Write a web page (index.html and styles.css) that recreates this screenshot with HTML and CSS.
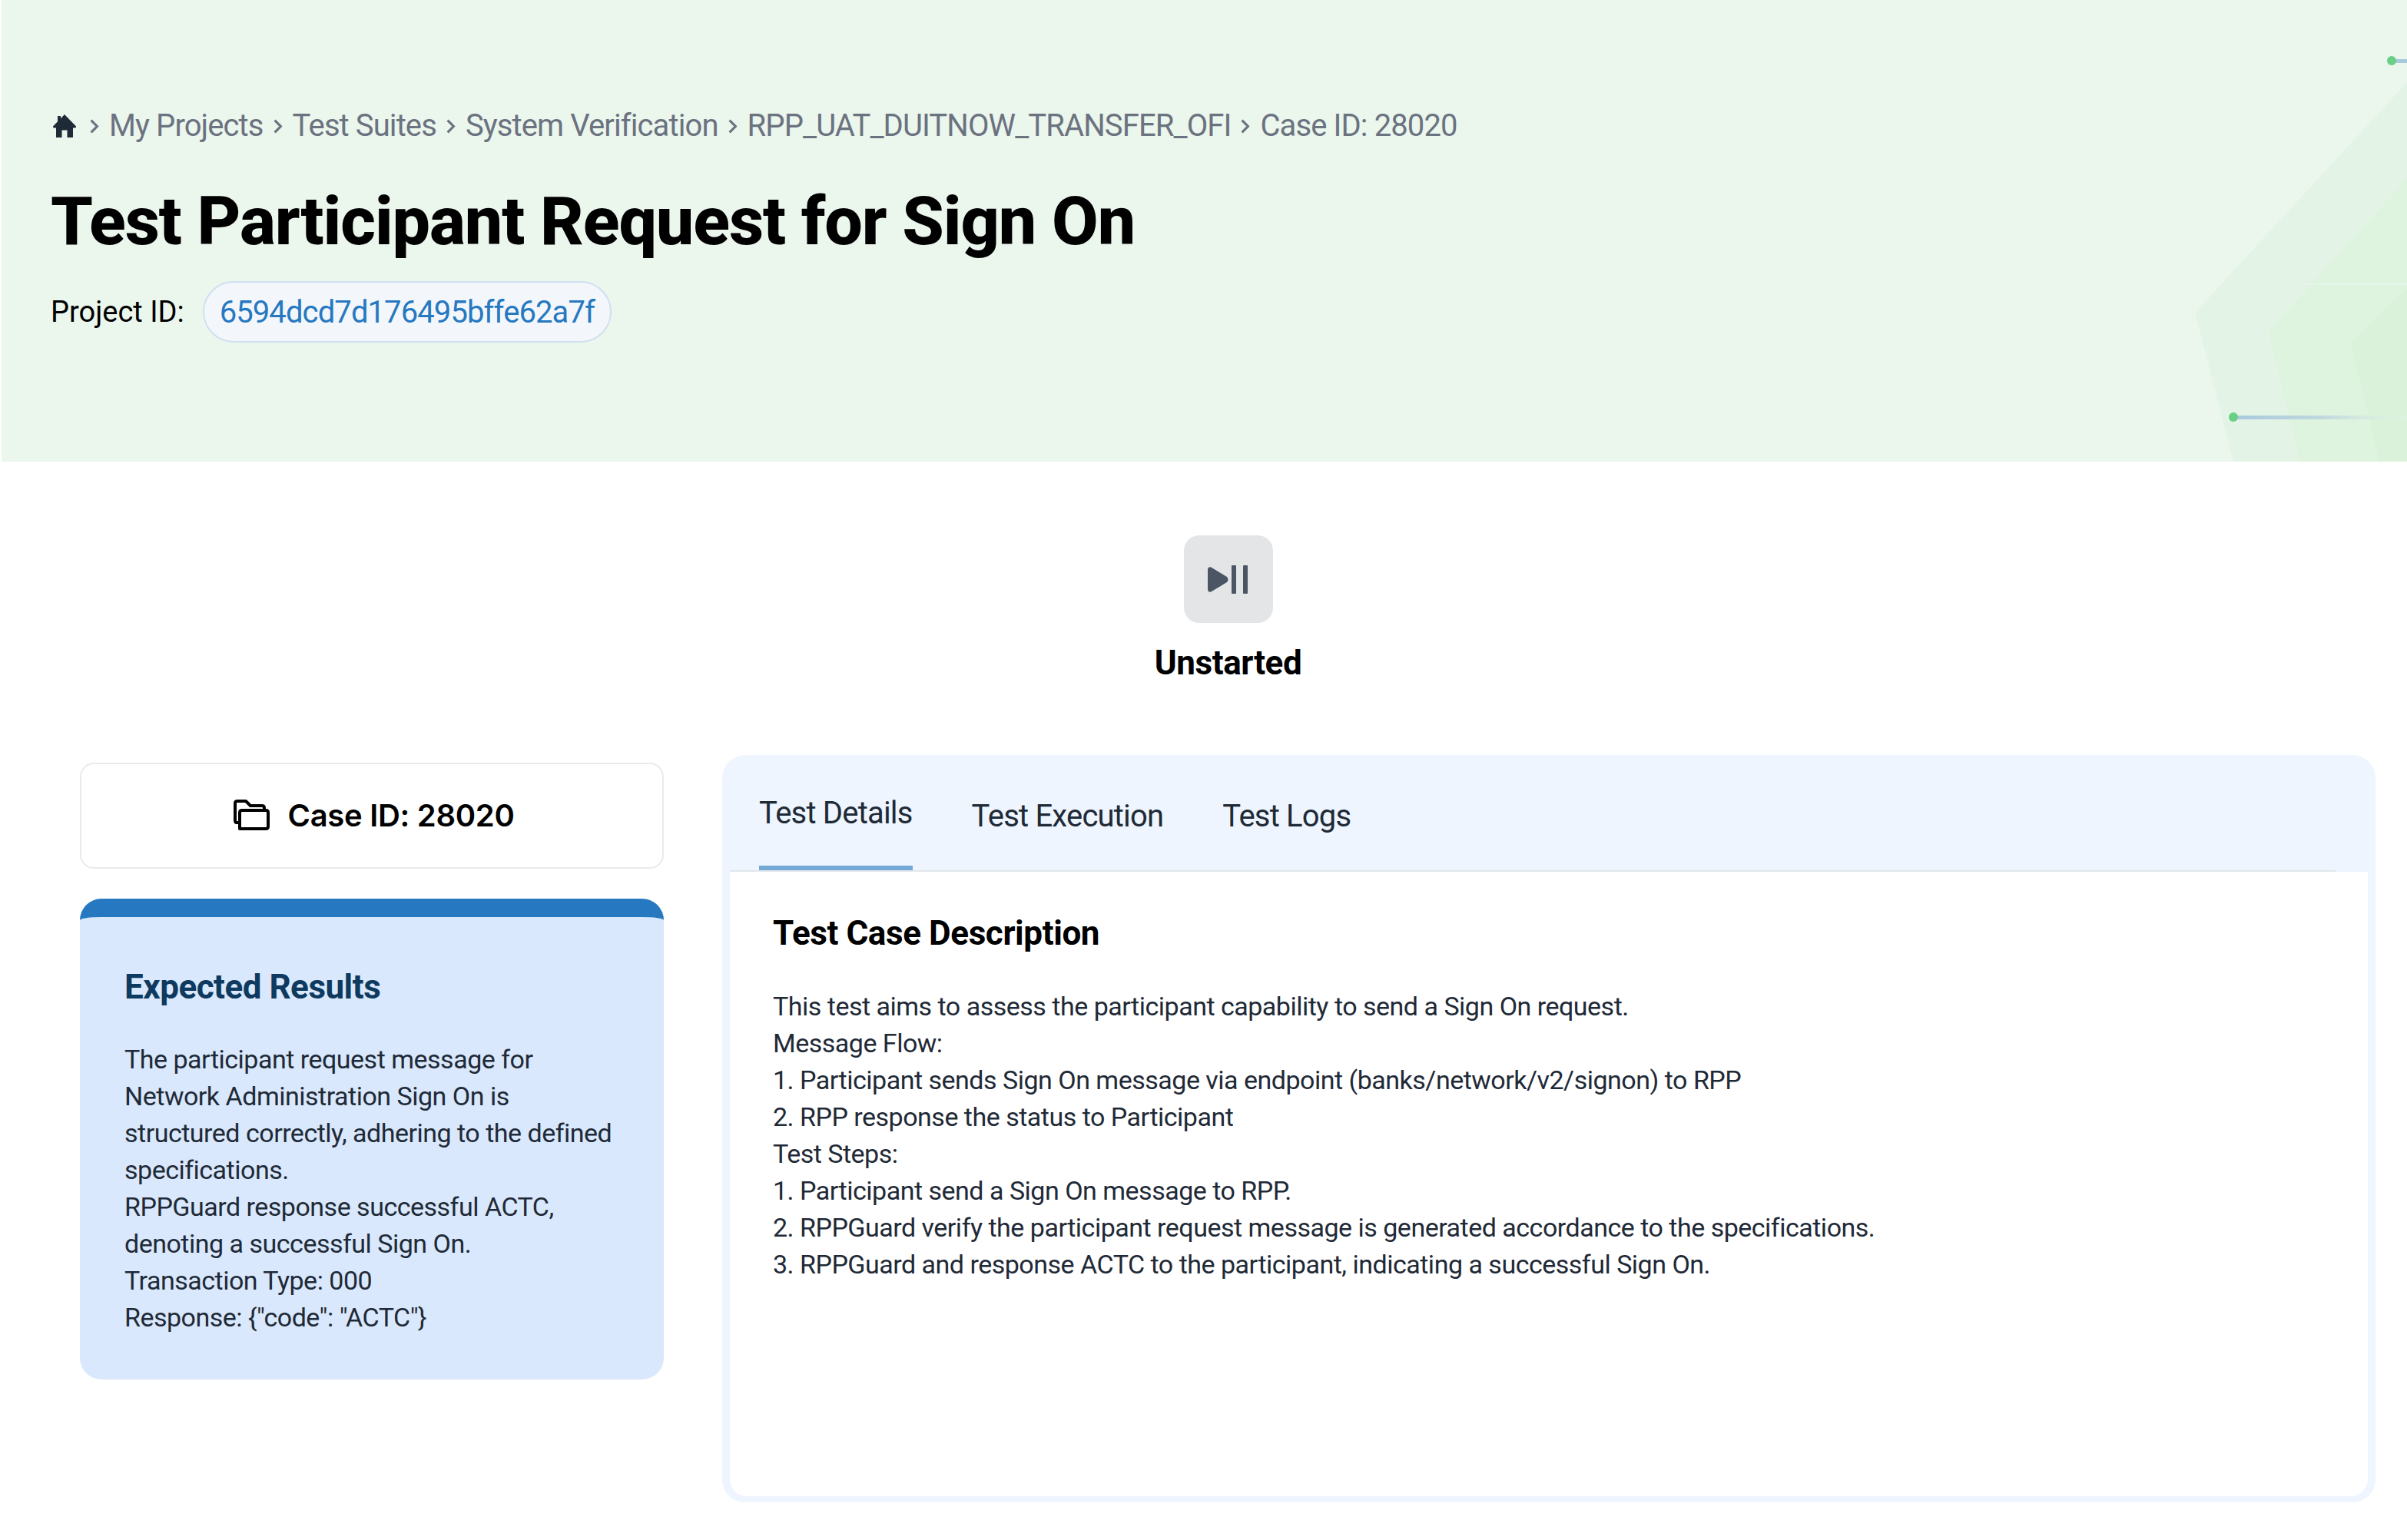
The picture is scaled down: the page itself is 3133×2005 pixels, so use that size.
FILE: index.html
```html
<!DOCTYPE html>
<html lang="en">
<head>
<meta charset="utf-8">
<title>Test Participant Request for Sign On</title>
<link rel="stylesheet" href="styles.css">
</head>
<body>
<header class="hero">
  <svg class="hero-art" viewBox="0 0 600 601" aria-hidden="true">
    <defs>
      <linearGradient id="fade" x1="0" x2="1" y1="0" y2="0">
        <stop offset="0" stop-color="#a9c9df"/>
        <stop offset="0.5" stop-color="#c0d8dd"/>
        <stop offset="1" stop-color="#e4f3e6" stop-opacity="0.4"/>
      </linearGradient>
    </defs>
    <polygon points="324,407 600,107 600,601 374,601" fill="#e3f4e6"/>
    <polygon points="420,431 600,233 600,601 460,601" fill="#def4df"/>
    <polygon points="527,447 600,375 600,601 564,601" fill="#d9f2d9"/>
    <rect x="467" y="369" width="133" height="2" fill="#e6f6e8"/>
    <rect x="580" y="77" width="20" height="5" fill="#a9c9df"/>
    <circle cx="580" cy="79" r="6" fill="#68cf85"/>
    <rect x="374" y="541" width="226" height="5" fill="url(#fade)"/>
    <circle cx="374" cy="543" r="6" fill="#68cf85"/>
  </svg>
  <nav class="crumbs">
    <svg class="home" viewBox="0 0 32 32" aria-hidden="true"><path d="M16 1 L31 16.5 Q31.5 18.5 29.5 18.5 H27 V31 H19.5 V21.5 H12.5 V31 H5 V18.5 H2.5 Q.5 18.5 1 16.5 L7 10.3 V3 H11 V6.2 Z" fill="#1f2a37"/></svg>
    <svg class="sep" viewBox="0 0 10 16" aria-hidden="true"><path d="M2 2 L8 8 L2 14" fill="none" stroke="#6b7280" stroke-width="2.4"/></svg>
    <span>My Projects</span>
    <svg class="sep" viewBox="0 0 10 16" aria-hidden="true"><path d="M2 2 L8 8 L2 14" fill="none" stroke="#6b7280" stroke-width="2.4"/></svg>
    <span>Test Suites</span>
    <svg class="sep" viewBox="0 0 10 16" aria-hidden="true"><path d="M2 2 L8 8 L2 14" fill="none" stroke="#6b7280" stroke-width="2.4"/></svg>
    <span>System Verification</span>
    <svg class="sep" viewBox="0 0 10 16" aria-hidden="true"><path d="M2 2 L8 8 L2 14" fill="none" stroke="#6b7280" stroke-width="2.4"/></svg>
    <span>RPP_UAT_DUITNOW_TRANSFER_OFI</span>
    <svg class="sep" viewBox="0 0 10 16" aria-hidden="true"><path d="M2 2 L8 8 L2 14" fill="none" stroke="#6b7280" stroke-width="2.4"/></svg>
    <span>Case ID: 28020</span>
  </nav>
  <h1 class="title">Test Participant Request for Sign On</h1>
  <div class="project">
    <span class="project-label">Project ID:</span>
    <span class="pill">6594dcd7d176495bffe62a7f</span>
  </div>
</header>

<section class="status">
  <div class="status-icon">
    <svg viewBox="0 0 52 37" aria-hidden="true">
      <path d="M1 6 Q1 2 5 4 L24 15.5 Q27 18.5 24 21.5 L5 33 Q1 35 1 31 Z" fill="#4b5563" stroke="#4b5563" stroke-width="2" stroke-linejoin="round"/>
      <rect x="31" y="0" width="6" height="37" rx="1" fill="#4b5563"/>
      <rect x="46" y="0" width="6" height="37" rx="1" fill="#4b5563"/>
    </svg>
  </div>
  <div class="status-label">Unstarted</div>
</section>

<main class="content">
  <aside class="side">
    <div class="case-card">
      <svg class="folder" viewBox="0 0 48 40" aria-hidden="true">
        <path d="M9 30 H5 Q3 30 3 27 V5 Q3 2 6 2 H17 L23 8 H38 Q41 8 41 11 V14" fill="none" stroke="#000" stroke-width="4" stroke-linejoin="round"/>
        <path d="M9 38 V17 Q9 14 12 14 H43 Q46 14 46 17 V35 Q46 38 43 38 Z" fill="none" stroke="#000" stroke-width="4" stroke-linejoin="round"/>
      </svg>
      <span>Case ID: 28020</span>
    </div>
    <div class="results">
      <h2>Expected Results</h2>
      <p>The participant request message for<br>Network Administration Sign On is<br>structured correctly, adhering to the defined<br>specifications.<br>RPPGuard response successful ACTC,<br>denoting a successful Sign On.<br>Transaction Type: 000<br>Response: {"code": "ACTC"}</p>
    </div>
  </aside>

  <section class="panel">
    <div class="tabs">
      <div class="tab tab-active">Test Details</div>
      <div class="tab">Test Execution</div>
      <div class="tab">Test Logs</div>
    </div>
    <div class="panel-body">
      <h2>Test Case Description</h2>
      <p>This test aims to assess the participant capability to send a Sign On request.<br>Message Flow:<br>1. Participant sends Sign On message via endpoint (banks/network/v2/signon) to RPP<br>2. RPP response the status to Participant<br>Test Steps:<br>1. Participant send a Sign On message to RPP.<br>2. RPPGuard verify the participant request message is generated accordance to the specifications.<br>3. RPPGuard and response ACTC to the participant, indicating a successful Sign On.</p>
    </div>
  </section>
</main>
</body>
</html>
```

FILE: styles.css
```css
* { box-sizing: border-box; }

html, body {
  margin: 0;
  padding: 0;
  background: #fff;
  font-family: Roboto, "Liberation Sans", sans-serif;
  color: #000;
}

body {
  width: 3133px;
  height: 2005px;
  overflow: hidden;
}

.hero {
  position: relative;
  height: 601px;
  margin-left: 2px;
  padding: 138px 0 0 64px;
  background: #ebf6ed;
  overflow: hidden;
}

.hero-art {
  position: absolute;
  top: 0;
  right: 0;
  width: 600px;
  height: 601px;
}

.crumbs {
  position: relative;
  display: flex;
  align-items: center;
  height: 52px;
  color: #6b7280;
  font-size: 40px;
  line-height: 52px;
  letter-spacing: -0.9px;
}

.home { width: 32px; height: 32px; margin: 0 16px 0 2px; }
.sep { width: 13px; height: 21px; margin: 0 13px 0 0; }
.crumbs span { margin-right: 12px; }

.title {
  position: relative;
  margin: 46px 0 0;
  font-size: 88px;
  line-height: 104px;
  font-weight: 800;
  letter-spacing: -1.1px;
  color: #000;
}

.project {
  position: relative;
  display: flex;
  align-items: center;
  margin-top: 26px;
}

.project-label { font-size: 38px; margin-right: 24px; }

.pill {
  display: flex;
  align-items: center;
  height: 80px;
  padding: 0 20px;
  border: 2px solid #cfe0f0;
  border-radius: 40px;
  background: #f3f7fb;
  color: #2678c0;
  font-size: 40px;
  letter-spacing: -0.9px;
}

.status {
  display: flex;
  flex-direction: column;
  align-items: center;
  padding-top: 96px;
  margin-left: 64px;
}

.status-icon {
  display: flex;
  align-items: center;
  justify-content: center;
  width: 116px;
  height: 114px;
  border-radius: 20px;
  background: #e4e5e7;
}

.status-icon svg { width: 52px; height: 37px; margin-left: -2px; }

.status-label {
  margin-top: 24px;
  font-size: 44px;
  line-height: 56px;
  font-weight: 700;
  letter-spacing: -0.4px;
}

.content {
  display: flex;
  align-items: flex-start;
  margin-top: 92px;
  padding: 0 40px 0 104px;
  gap: 76px;
}

.side {
  flex: 0 0 760px;
  padding-top: 10px;
}

.case-card {
  display: flex;
  align-items: center;
  justify-content: center;
  gap: 24px;
  height: 138px;
  padding: 0 0 2px 4px;
  border: 2px solid #e8ebee;
  border-radius: 18px;
  font-family: Inter, Roboto, sans-serif;
  font-size: 40px;
  font-weight: 600;
  letter-spacing: -0.3px;
}

.folder { width: 48px; height: 40px; }

.results {
  margin-top: 39px;
  height: 626px;
  padding: 63px 40px 0 58px;
  border-top: 24px solid #2678c0;
  border-radius: 28px;
  background: #d9e8fc;
  color: #1f2a37;
}

.results h2 {
  margin: 0;
  font-size: 44px;
  line-height: 56px;
  font-weight: 700;
  letter-spacing: -0.5px;
  color: #0f3a5f;
}

.results p,
.panel-body p {
  margin: 0;
  font-size: 34px;
  line-height: 48px;
  letter-spacing: -0.5px;
  color: #1f2a37;
}

.results p { margin-top: 42px; }

.panel {
  flex: 0 0 2152px;
  height: 973px;
  display: flex;
  flex-direction: column;
  border-radius: 30px;
  background: #eef5fe;
  padding: 0 10px 8px 10px;
}

.tabs {
  display: flex;
  flex: 0 0 150px;
  gap: 77px;
  padding-left: 38px;
  margin: 0 42px 0 0;
  border-bottom: 2px solid #e2e7ec;
}

.tab {
  padding-top: 56px;
  font-size: 40px;
  line-height: 48px;
  letter-spacing: -0.8px;
  color: #1f2a37;
}

.tab-active {
  padding-top: 52px;
  border-bottom: 6px solid #74a9d6;
  height: 150px;
}

.panel-body {
  flex: 1;
  padding: 52px 56px 0;
  background: #fff;
  border-radius: 0 0 22px 22px;
}

.panel-body h2 {
  margin: 0;
  font-size: 44px;
  line-height: 56px;
  font-weight: 700;
  letter-spacing: -0.4px;
  color: #000;
}

.panel-body p { margin-top: 43px; }
```
